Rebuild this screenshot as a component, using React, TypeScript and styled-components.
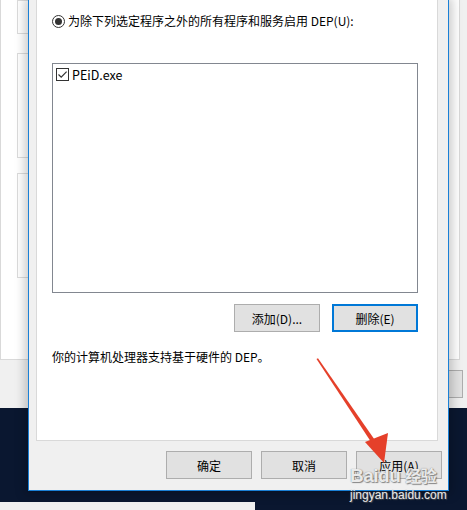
import React from 'react';
import styled, { createGlobalStyle } from 'styled-components';

const Global = createGlobalStyle`
  html, body { margin: 0; padding: 0; }
  body {
    width: 467px; height: 510px; overflow: hidden;
    font-family: "Noto Sans CJK SC", "Microsoft YaHei", sans-serif;
    color: #000;
  }
`;

const Desktop = styled.div`
  position: relative;
  width: 467px;
  height: 510px;
  overflow: hidden;
  background: #0a1730;
`;

/* background window (behind the dialog) */
const BgWindow = styled.div`
  position: absolute;
  left: 0;
  top: 0;
  width: 467px;
  height: 408px;
  background: #f0f0f0;
  display: flex;
  flex-direction: column;
`;

const BgPanel = styled.div`
  width: 460px;
  height: 360px;
  background: #ffffff;
  border: 1px solid #d9d9d9;
  border-top: none;
  box-sizing: border-box;
  padding-left: 16px;
  display: flex;
  flex-direction: column;
`;

const GroupBox = styled.div<{ $h: number; $mt: number }>`
  width: 430px;
  height: ${p => p.$h}px;
  margin-top: ${p => p.$mt}px;
  border: 1px solid #dcdcdc;
  box-sizing: border-box;
  flex: none;
`;

const BgButtonRow = styled.div`
  display: flex;
  justify-content: flex-end;
  padding: 10px 4px 0 0;
`;

const BgButton = styled.div`
  width: 86px;
  height: 28px;
  background: #e1e1e1;
  border: 1px solid #adadad;
  box-sizing: border-box;
`;

const BottomStrip = styled.div`
  position: absolute;
  left: 0;
  top: 502px;
  width: 255px;
  height: 8px;
  background: #f0f0f0;
`;

/* foreground DEP dialog */
const Dialog = styled.div`
  position: absolute;
  left: 28px;
  top: 0;
  width: 421px;
  height: 491px;
  box-sizing: border-box;
  background: #f0f0f0;
  border: 1px solid #1a80d6;
  border-top: none;
  box-shadow: 0 0 10px 3px rgba(0, 0, 0, 0.22);
  display: flex;
  flex-direction: column;
  padding: 0 7px 11px 7px;
`;

const TabPage = styled.div`
  width: 402px;
  height: 441px;
  box-sizing: border-box;
  background: #ffffff;
  border: 1px solid #d9d9d9;
  border-top: none;
  padding: 14px 20px 0 15px;
  display: flex;
  flex-direction: column;
`;

const RadioRow = styled.label`
  display: flex;
  align-items: center;
  height: 14px;
  gap: 3px;
  font-size: 12px;
  line-height: 14px;
  white-space: nowrap;
`;

const Radio = styled.span`
  width: 13px;
  height: 13px;
  border-radius: 50%;
  border: 1px solid #333;
  box-sizing: border-box;
  display: flex;
  align-items: center;
  justify-content: center;
  flex: none;
  &::after {
    content: '';
    width: 7px;
    height: 7px;
    border-radius: 50%;
    background: #333;
  }
`;

const ListBox = styled.div`
  margin-top: 35px;
  width: 366px;
  height: 230px;
  box-sizing: border-box;
  border: 1px solid #828790;
  background: #fff;
  padding: 4px 3px;
`;

const ListItem = styled.div`
  display: flex;
  align-items: center;
  gap: 3px;
  height: 13px;
  font-size: 12.5px;
  line-height: 13px;
`;

const Check = styled.span`
  width: 13px;
  height: 13px;
  border: 1px solid #333;
  box-sizing: border-box;
  display: flex;
  align-items: center;
  justify-content: center;
  flex: none;
`;

const ButtonRow = styled.div<{ $gap: number }>`
  display: flex;
  justify-content: flex-end;
  gap: ${p => p.$gap}px;
`;

const ListButtons = styled(ButtonRow)`
  margin-top: 11px;
  width: 366px;
`;

const Button = styled.button<{ $focused?: boolean }>`
  width: 86px;
  height: 28px;
  box-sizing: border-box;
  margin: 0;
  padding: 0;
  background: #e1e1e1;
  border: ${p => (p.$focused ? '2px solid #0078d7' : '1px solid #adadad')};
  font-family: "Noto Sans CJK SC", "Microsoft YaHei", sans-serif;
  font-size: 12px;
  color: #000;
`;

const Info = styled.div`
  margin-top: 17px;
  font-size: 12px;
  line-height: 16px;
  white-space: nowrap;
`;

const DialogButtons = styled(ButtonRow)`
  margin-top: 10px;
  padding-right: 0;
  width: 406px;
`;

const ArrowSvg = styled.svg`
  position: absolute;
  left: 0;
  top: 0;
  pointer-events: none;
`;

const Watermark = styled.div`
  position: absolute;
  left: 350px;
  top: 465px;
  display: flex;
  flex-direction: column;
  align-items: flex-start;
  color: rgba(255, 255, 255, 0.85);
  text-shadow: 0 0 1px #777, 1px 1px 1px rgba(90, 90, 90, 0.7);
  pointer-events: none;
`;

const WmTop = styled.div`
  display: flex;
  align-items: baseline;
  gap: 5px;
  font-family: "Liberation Sans", Arial, sans-serif;
  font-size: 19px;
  font-weight: bold;
  line-height: 20px;
  letter-spacing: -0.5px;
`;

const WmCn = styled.span`
  font-family: "Noto Sans CJK SC", sans-serif;
  font-size: 16px;
  font-weight: bold;
`;

const WmUrl = styled.div`
  font-family: "Liberation Sans", Arial, sans-serif;
  font-size: 12px;
  line-height: 14px;
  margin-top: 2px;
`;

export default function App() {
  return (
    <>
      <Global />
      <Desktop>
        <BgWindow>
          <BgPanel>
            <GroupBox $h={34} $mt={0} />
            <GroupBox $h={105} $mt={19} />
            <GroupBox $h={105} $mt={15} />
          </BgPanel>
          <BgButtonRow>
            <BgButton />
          </BgButtonRow>
        </BgWindow>
        <BottomStrip />

        <Dialog>
          <TabPage>
            <RadioRow>
              <Radio />
              为除下列选定程序之外的所有程序和服务启用 DEP(U):
            </RadioRow>
            <ListBox>
              <ListItem>
                <Check>
                  <svg width="11" height="11" viewBox="0 0 11 11">
                    <path d="M1.5 5.5 L4.2 8.2 L9.6 2.6" fill="none" stroke="#333" strokeWidth="1.2" />
                  </svg>
                </Check>
                PEiD.exe
              </ListItem>
            </ListBox>
            <ListButtons $gap={12}>
              <Button>添加(D)...</Button>
              <Button $focused>删除(E)</Button>
            </ListButtons>
            <Info>你的计算机处理器支持基于硬件的 DEP。</Info>
          </TabPage>
          <DialogButtons $gap={9}>
            <Button>确定</Button>
            <Button>取消</Button>
            <Button>应用(A)</Button>
          </DialogButtons>
        </Dialog>

        <ArrowSvg width="467" height="510" viewBox="0 0 467 510">
          <path d="M316.5 359 L318 358.2 L379 446 L375 448 Z" fill="#e5402a" />
          <path d="M384 463 L365 442 L388 433 Z" fill="#e5402a" />
        </ArrowSvg>

        <Watermark>
          <WmTop>
            Baidu<WmCn>经验</WmCn>
          </WmTop>
          <WmUrl>jingyan.baidu.com</WmUrl>
        </Watermark>
      </Desktop>
    </>
  );
}
